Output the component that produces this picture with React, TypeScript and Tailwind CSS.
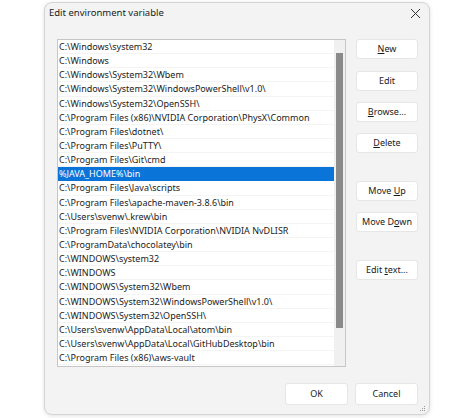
import React from "react";

const rows = [
  "C:\\Windows\\system32",
  "C:\\Windows",
  "C:\\Windows\\System32\\Wbem",
  "C:\\Windows\\System32\\WindowsPowerShell\\v1.0\\",
  "C:\\Windows\\System32\\OpenSSH\\",
  "C:\\Program Files (x86)\\NVIDIA Corporation\\PhysX\\Common",
  "C:\\Program Files\\dotnet\\",
  "C:\\Program Files\\PuTTY\\",
  "C:\\Program Files\\Git\\cmd",
  "%JAVA_HOME%\\bin",
  "C:\\Program Files\\Java\\scripts",
  "C:\\Program Files\\apache-maven-3.8.6\\bin",
  "C:\\Users\\svenw\\.krew\\bin",
  "C:\\Program Files\\NVIDIA Corporation\\NVIDIA NvDLISR",
  "C:\\ProgramData\\chocolatey\\bin",
  "C:\\WINDOWS\\system32",
  "C:\\WINDOWS",
  "C:\\WINDOWS\\System32\\Wbem",
  "C:\\WINDOWS\\System32\\WindowsPowerShell\\v1.0\\",
  "C:\\WINDOWS\\System32\\OpenSSH\\",
  "C:\\Users\\svenw\\AppData\\Local\\atom\\bin",
  "C:\\Users\\svenw\\AppData\\Local\\GitHubDesktop\\bin",
  "C:\\Program Files (x86)\\aws-vault",
];

function Btn({ children, className = "" }: { children: React.ReactNode; className?: string }) {
  return (
    <div
      className={
        "flex h-[20px] w-[62px] items-center justify-center rounded-[3px] border border-[#e6e6e6] bg-white text-[9px] text-[#1a1a1a] " +
        className
      }
    >
      <span className="whitespace-pre">{children}</span>
    </div>
  );
}

export default function App() {
  return (
    <div
      className="h-[418px] w-[474px] bg-white pl-[44px] pt-[2px]"
      style={{ fontFamily: '"Noto Sans", "Open Sans", sans-serif' }}
    >
      <div className="relative flex h-[413px] w-[386px] flex-col rounded-[8px] border border-[#d4d4d4] bg-[#f3f3f3] shadow-[0_1px_4px_rgba(0,0,0,0.12)]">
        <div className="flex h-[36px] items-start justify-between pl-[4px] pr-[8px] pt-[2px]">
          <span className="text-[9.5px] leading-[16px] text-[#1a1a1a]">Edit environment variable</span>
          <svg width="11" height="11" viewBox="0 0 11 11" className="mt-[3px]">
            <path d="M1 1 L10 10 M10 1 L1 10" stroke="#333" strokeWidth="1" />
          </svg>
        </div>
        <div className="flex pl-[12px]">
          <div className="flex h-[328px] w-[289px] border border-[#c6c6c6] bg-white">
            <div className="flex flex-1 flex-col">
              {rows.map((r, i) => (
                <div
                  key={i}
                  className={
                    "h-[14.15px] shrink-0 whitespace-nowrap pl-[1px] text-[9px] leading-[14px] " +
                    (i === 9
                      ? "bg-[#0a74d8] text-white"
                      : "border-b border-[#f4f4f4] text-[#222]")
                  }
                >
                  {r}
                </div>
              ))}
            </div>
            <div className="flex w-[11px] flex-col items-center bg-[#f0f0f0] pt-[13px]">
              <div className="h-[275px] w-[7px] bg-[#8a8a8a]" />
            </div>
          </div>
          <div className="ml-[10px] flex flex-col">
            <Btn>
              <span className="underline">N</span>ew
            </Btn>
            <Btn className="mt-[12px]">Edit</Btn>
            <Btn className="mt-[11px]">
              <span className="underline">B</span>rowse...
            </Btn>
            <Btn className="mt-[11px]">
              <span className="underline">D</span>elete
            </Btn>
            <Btn className="mt-[28px]">
              {"Move "}
              <span className="underline">U</span>p
            </Btn>
            <Btn className="mt-[11px]">
              {"Move D"}
              <span className="underline">o</span>wn
            </Btn>
            <Btn className="mt-[28px]">
              {"Edit "}
              <span className="underline">t</span>ext...
            </Btn>
          </div>
        </div>
        <div className="mt-[16px] flex justify-end gap-[7px] pr-[11px]">
          <Btn className="h-[22px] w-[63px] border-[#7fb2e0]">OK</Btn>
          <Btn className="h-[22px] w-[63px]">Cancel</Btn>
        </div>
        <svg width="6" height="6" viewBox="0 0 6 6" className="absolute bottom-[2px] right-[3px]">
          <rect x="4" y="0" width="1" height="1" fill="#999" />
          <rect x="2" y="2" width="1" height="1" fill="#999" />
          <rect x="4" y="2" width="1" height="1" fill="#999" />
          <rect x="0" y="4" width="1" height="1" fill="#999" />
          <rect x="2" y="4" width="1" height="1" fill="#999" />
          <rect x="4" y="4" width="1" height="1" fill="#999" />
        </svg>
      </div>
    </div>
  );
}
